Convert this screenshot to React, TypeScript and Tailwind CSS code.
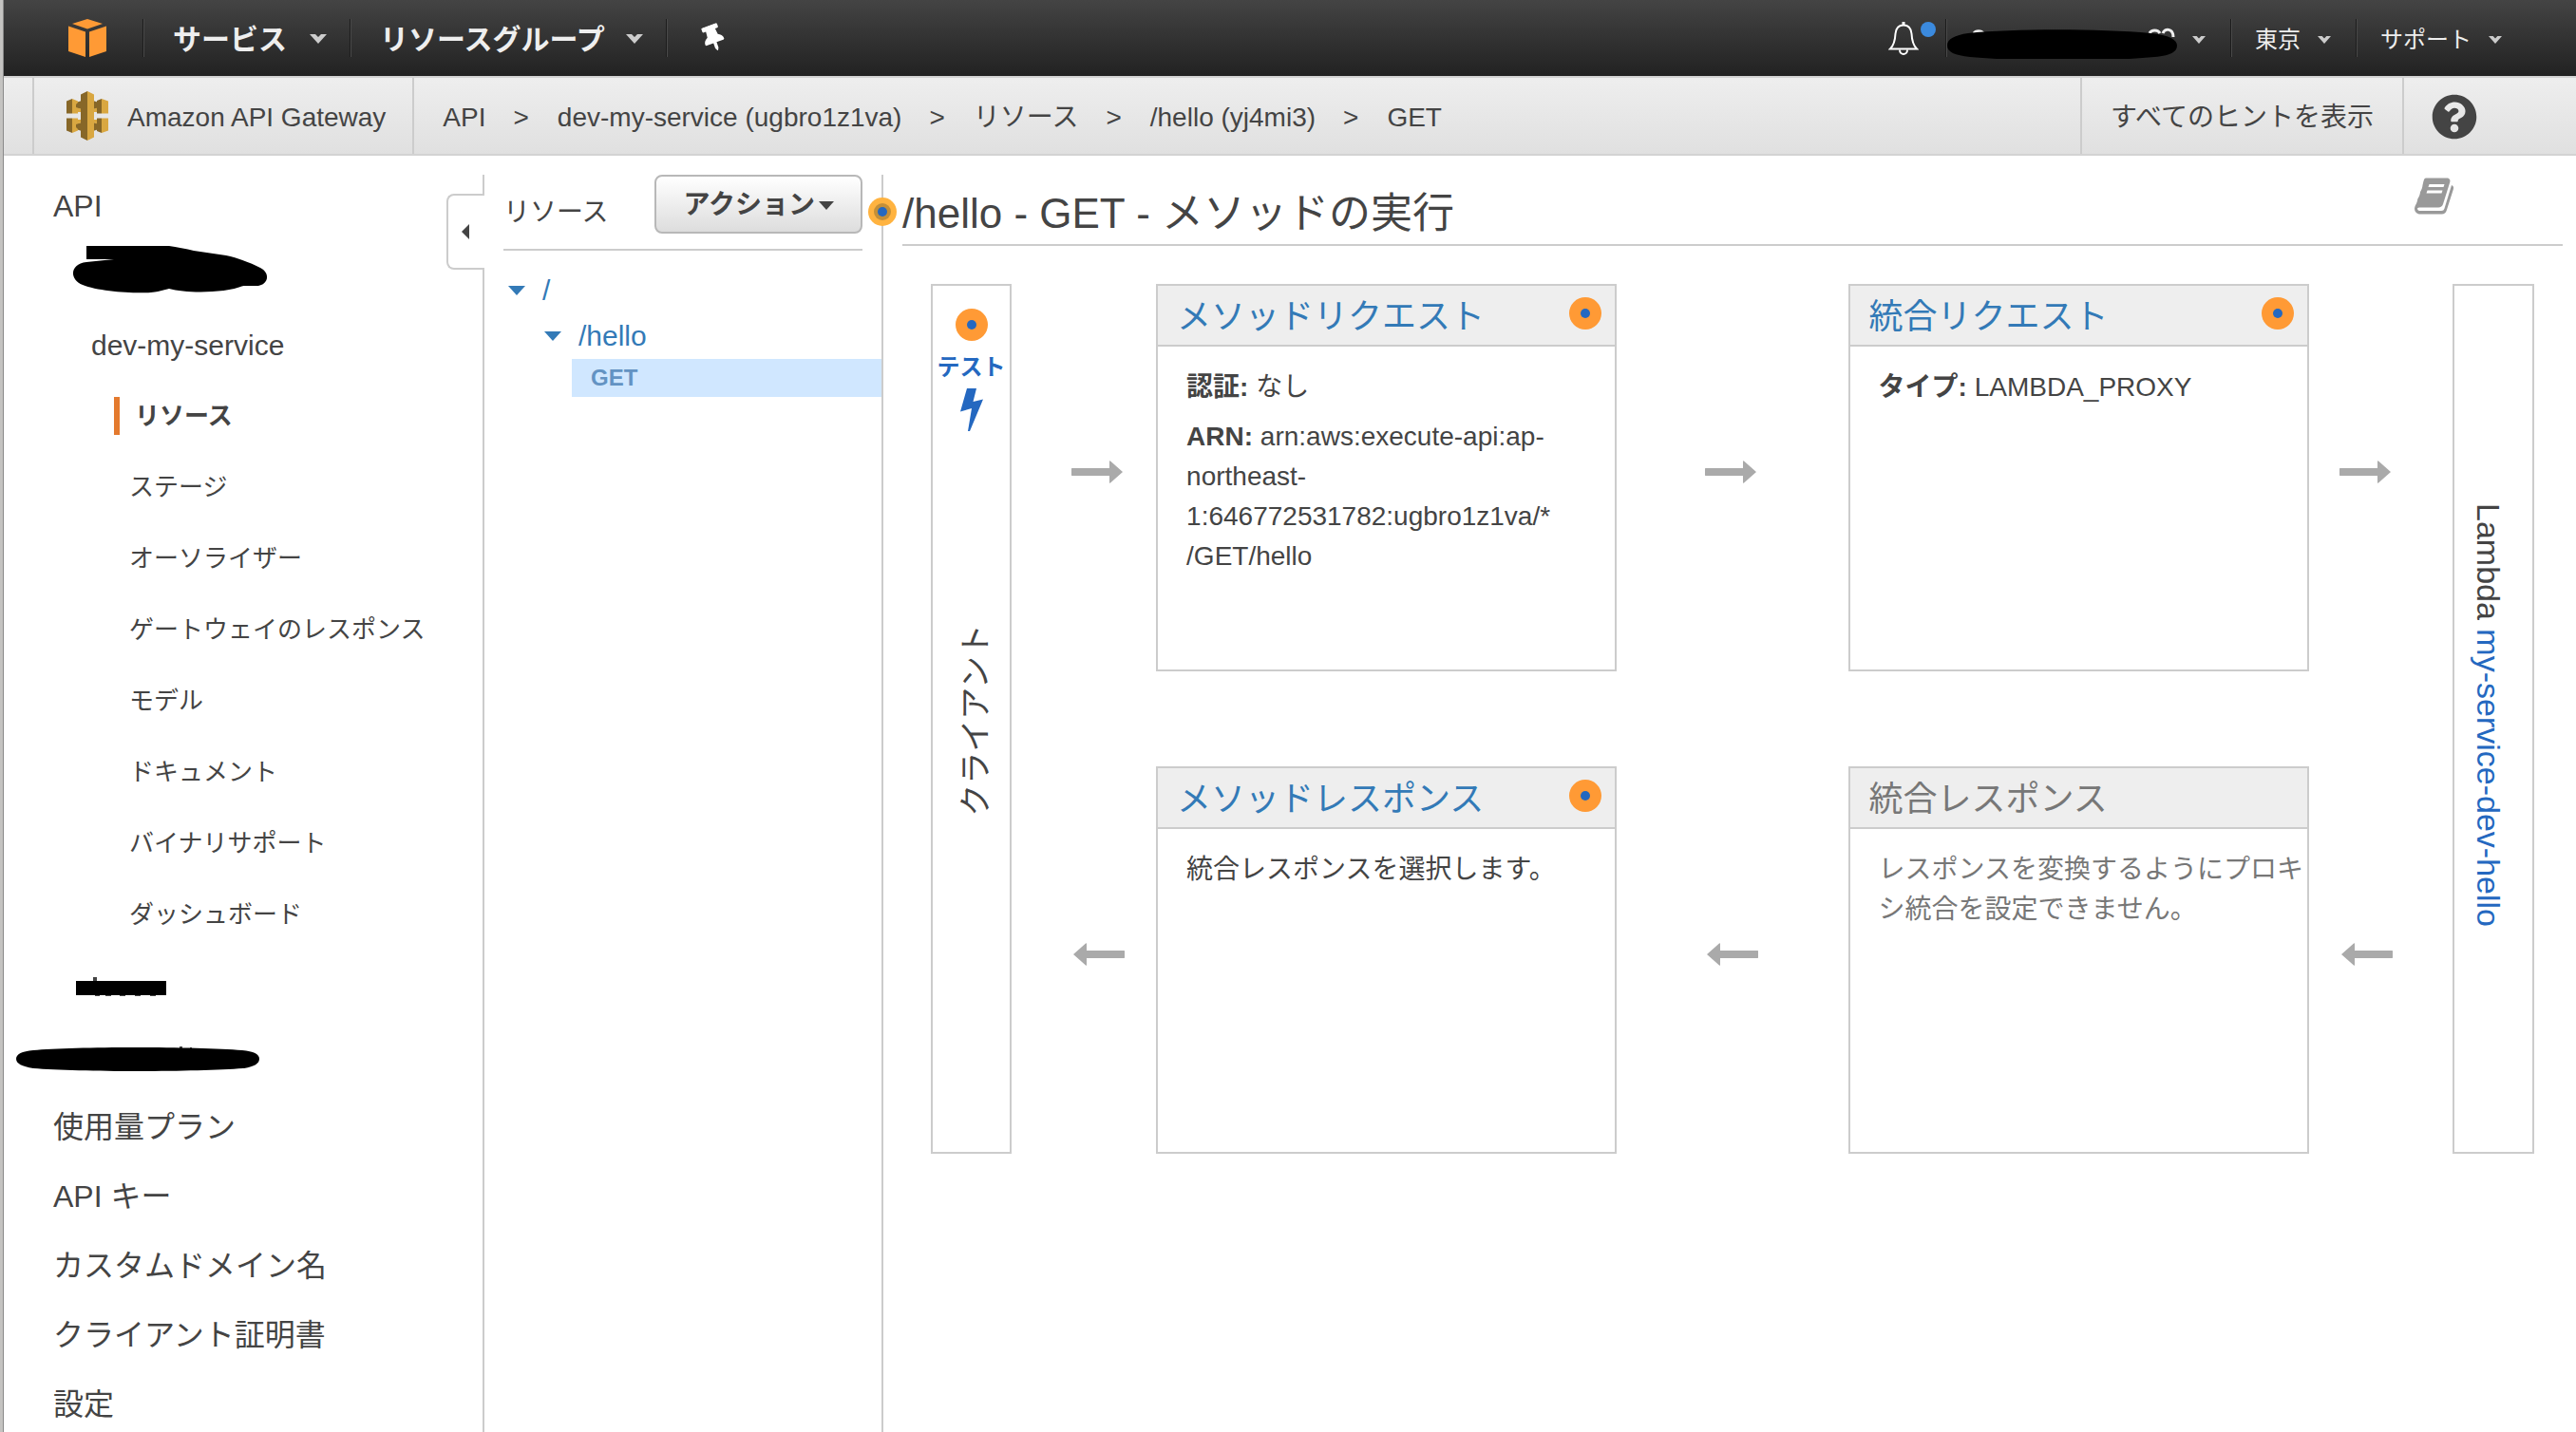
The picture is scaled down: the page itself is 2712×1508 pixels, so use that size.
import React from "react";
import { FaQuestionCircle, FaThumbtack } from "react-icons/fa";

const SUB_PAGES = [
  "ステージ",
  "オーソライザー",
  "ゲートウェイのレスポンス",
  "モデル",
  "ドキュメント",
  "バイナリサポート",
  "ダッシュボード",
];

const SETTINGS_PAGES = [
  "使用量プラン",
  "API キー",
  "カスタムドメイン名",
  "クライアント証明書",
  "設定",
];

const BREADCRUMBS = [
  "API",
  "dev-my-service (ugbro1z1va)",
  "リソース",
  "/hello (yj4mi3)",
  "GET",
];

const AwsLogo = () => (
  <svg className="w-10 h-10" viewBox="0 0 40 40" fill="#ff9a35">
    <path d="M20 0 36 5 20 10.500 4 5z" />
    <path d="M0 7.500 18 13.500V40L0 34z" />
    <path d="M40 7.500 22 13.500V40L40 34z" />
  </svg>
);

const GatewayLogo = () => (
  <svg className="w-11 h-[52px]" viewBox="0 0 44 52">
    <g id="gateway-arms">
      <path fill="#876728" d="M10 12l6-2v9l-6-1zM34 12l-6-2v9l6-1z" />
      <path fill="#d9a741" d="M10 17l6 2v3H9zM34 17l-6 2v3h7z" />
      <path fill="#876728" d="M0 10.500 6 8v15.500H0zM32 10l5-2v15.500h-5z" />
      <path fill="#d9a741" d="M6 8l6 2.500V12l-2 2v5l2 2v2.500H6zM37 8l7 2.500v13h-7z" />
    </g>
    <use href="#gateway-arms" transform="matrix(1 0 0 -1 0 52)" />
    <path fill="#876728" d="M22 0v52l-7-3.500v-45z" />
    <path fill="#d9a741" d="M22 0v52l7-3.500v-45z" />
  </svg>
);

const BellIcon = () => (
  <svg className="w-8 h-9" viewBox="0 0 32 36" fill="none" stroke="white" strokeWidth="2">
    <path d="M16 0v4" strokeWidth="3" />
    <path d="M16 3.500c-5.500 0-8 4-8.500 9-.4 8-1.500 12-5.500 16h28c-4-4-5.100-8-5.500-16-.5-5-3-9-8.500-9z" />
    <path d="M12 29.500c0 6 8 6 8 0" />
  </svg>
);

const BookIcon = () => (
  <svg className="w-[42px] h-[39px]" viewBox="0 0 42 39">
    <path
      fill="#999999"
      d="M12 .5h22c2.500 0 4 1.800 3.300 4.200L30 28c-.8 2.300-2.300 3.500-5 3.500H5c-1.500 0-2.300.7-1.800 2 .5 1.200 1.500 1.500 3 1.500h22c1.800 0 2.800-.8 3.300-2.500L39 8c2 1 2.500 2.300 1.800 4.500l-7 22c-.8 2.500-2.500 4-5 4H6c-3.500 0-6-2.500-6-6 0-1 .5-2 .8-3 1.500-2.500 2.200-4.500 2.500-7 1.500-2.500 2.500-4.500 2.800-7.500 1.400-2.300 2.200-4.500 2.400-7C9.500 5 9.500.5 12 .5z"
    />
    <path fill="white" d="M15.500 7h16l-1 3h-16zM13.500 13.500h16l-1 3h-16z" />
  </svg>
);

const Caret = ({ className }: { className?: string }) => (
  <svg className={className} viewBox="0 0 18 10" fill="currentColor">
    <path d="M0 0h18L9 10z" />
  </svg>
);

const NavCaret = ({ className }: { className: string }) => (
  <svg className={className} viewBox="0 0 18 10" fill="#cccccc">
    <path d="M0 0h6l3 3 3-3h6L9 10z" />
  </svg>
);

const NavDivider = () => (
  <div className="w-[2px] h-10 shrink-0 bg-[#4a4a4a] border-l border-[#1c1c1c]" />
);

const HintDot = ({ className = "" }: { className?: string }) => (
  <button aria-label="ヒント" className={`block shrink-0 ${className}`}>
    <svg className="w-[34px] h-[34px]" viewBox="0 0 34 34">
      <circle cx="17" cy="17" r="17" fill="#ff9a35" />
      <circle cx="17" cy="17" r="5" fill="#2468c0" />
    </svg>
  </button>
);

const FlowArrow = ({ back = false, className = "" }: { back?: boolean; className?: string }) => (
  <div className={`flex items-center justify-center pb-3 ${className}`}>
    <svg className={`w-[54px] h-6 ${back ? "-scale-x-100" : ""}`} viewBox="0 0 54 24" fill="#aaaaaa">
      <path d="M1 8h39V1c0-1 .6-1 1-.5L54 12 41 23.500c-.4.5-1 .5-1-.5v-7H1c-1 0-1-.5-1-1V9c0-.5 0-1 1-1z" />
    </svg>
  </div>
);

interface MethodCardProps {
  title: string;
  disabled?: boolean;
  children: React.ReactNode;
}

const MethodCard: React.FC<MethodCardProps> = ({ title, disabled = false, children }) => (
  <section className="h-[408px] border-2 border-[#cccccc]">
    <header className="flex items-center justify-between h-16 pl-5 pr-[14px] bg-[#eeeeee] border-b-2 border-[#cccccc]">
      <h2 className="pt-1 text-[36px] leading-[60px]">
        {disabled ? (
          <span className="text-[#777777]">{title}</span>
        ) : (
          <a href="#" className="text-[#337ab7]">{title}</a>
        )}
      </h2>
      {!disabled && <HintDot className="mb-1" />}
    </header>
    <div className={`pl-[30px] pt-[22px] text-[28px] leading-[42px] ${disabled ? "text-[#777777]" : ""}`}>
      {children}
    </div>
  </section>
);

const TopNav = () => (
  <nav className="flex items-center h-20 shrink-0 bg-gradient-to-b from-[#444444] to-[#222222] text-[#eeeeee] [text-shadow:0_2px_1px_black]">
    <a href="#" aria-label="AWS" className="ml-[68px] mr-[38px]">
      <AwsLogo />
    </a>
    <NavDivider />
    <button className="flex items-center gap-6 pl-[30px] pr-6 pt-[2px] text-[30px] font-bold">
      サービス
      <NavCaret className="w-[18px] h-[10px]" />
    </button>
    <NavDivider />
    <button className="flex items-center gap-[22px] pl-[30px] pr-6 pt-[2px] text-[30px] font-bold">
      リソースグループ
      <NavCaret className="w-[18px] h-[10px]" />
    </button>
    <NavDivider />
    <button aria-label="ピン" className="px-9 text-white">
      <FaThumbtack className="w-6 h-7 -rotate-[20deg]" />
    </button>

    <div className="flex items-center ml-auto pr-[78px] text-[24px]">
      <button aria-label="通知" className="relative mr-7 pt-[2px]">
        <BellIcon />
        <span className="absolute top-[2px] left-[34px] w-4 h-4 rounded-full bg-[#3b8ade]" />
      </button>
      <NavDivider />
      <button aria-label="アカウント" className="flex items-center gap-4 pr-[26px] pt-[3px]">
        <svg className="w-[242px] h-10" viewBox="0 0 242 40">
          <path
            d="M28 13c2-3 8-3 10 0M213 13c2-4 9-4 11 0M227 13c2-6 11-5 11 4"
            fill="none"
            stroke="#eeeeee"
            strokeWidth="3"
          />
          <path
            d="M22 13C70 8 160 8 214 13c18 2 28 6 28 13s-8 11-24 12c-50 5-140 5-194 0C8 36 0 33 0 26S8 15 22 13z"
            fill="black"
          />
        </svg>
        <NavCaret className="w-[14px] h-2" />
      </button>
      <NavDivider />
      <button className="flex items-center gap-[18px] pl-6 pr-[26px] pt-[3px]">
        東京
        <NavCaret className="w-[14px] h-2" />
      </button>
      <NavDivider />
      <button className="flex items-center gap-[18px] pl-6 pt-[3px]">
        サポート
        <NavCaret className="w-[14px] h-2" />
      </button>
    </div>
  </nav>
);

const BreadcrumbBar = () => (
  <div className="flex h-[84px] shrink-0 pl-[30px] bg-gradient-to-b from-[#eeeeee] to-[#e0e0e0] border-y-2 border-[#d3d3d3] text-[28px]">
    <a href="#" className="flex items-center gap-5 pl-[34px] pr-7 border-x-2 border-[#cccccc]">
      <GatewayLogo />
      <span className="pt-[3px]">Amazon API Gateway</span>
    </a>
    <ol className="flex items-center pl-[30px] pt-[3px]">
      {BREADCRUMBS.map((crumb, index) => (
        <li key={crumb}>
          {index > 0 && <span className="pl-[29px] pr-[30px]">&gt;</span>}
          <a href="#">{crumb}</a>
        </li>
      ))}
    </ol>
    <button className="ml-auto px-[30px] pt-[3px] border-x-2 border-[#cccccc]">すべてのヒントを表示</button>
    <button aria-label="ヘルプ" className="pl-[29px] pr-[104px] pt-[2px]">
      <FaQuestionCircle className="w-12 h-12" />
    </button>
  </div>
);

const Sidebar = () => (
  <aside className="relative w-[506px] shrink-0 border-r-2 border-[#cccccc]">
    <a href="#" className="flex items-center h-[66px] pl-[52px] text-[32px]">API</a>
    <ul>
      <li className="h-[75px] pt-2 pl-[72px]">
        <svg className="w-[206px] h-[52px]" viewBox="0 0 206 52">
          <path d="M15 1h87c8 1 18 3 26 5l34 5c14 3 28 9 36 13 12 6 8 20-6 19h-12c-20 8-60 8-78 3l-12 3c-12 3-60 1-79-7-14-5-14-22 4-24l29-3H15z" />
        </svg>
      </li>
      <li className="h-[75px] pl-[92px]">
        <a href="#" className="text-[30px] leading-[78px]">dev-my-service</a>
      </li>
      <li className="flex items-center h-[75px] pl-[116px]">
        <a href="#" className="pl-4 border-l-[6px] border-[#e47a2e] text-[26px] leading-[40px] font-bold">
          リソース
        </a>
      </li>
      {SUB_PAGES.map((page) => (
        <li key={page} className="h-[75px] pl-[132px]">
          <a href="#" className="text-[26px] leading-[76px]">{page}</a>
        </li>
      ))}
      <li className="flex items-center h-[75px] pl-[76px] pt-1">
        <svg className="w-[95px] h-6" viewBox="0 0 95 24">
          <path d="M18 1h4v5h-4zM20 20h5v1h-5zM31 20h6v1h-6zM46 20h6v1h-6zM62 20h6v1h-6zM78 20h6v1h-6z" fill="#444444" />
          <path d="M0 5h95v15H0z" />
        </svg>
      </li>
      <li className="flex items-center h-[75px] pl-[13px] pt-1">
        <svg className="w-[256px] h-7" viewBox="0 0 256 28">
          <path d="M172 1h3v3h-3zM183 2h2v3h-2z" fill="#444444" />
          <path d="M18 5C60 1 190 1 238 5c12 1 18 4 18 9s-5 8-16 10c-48 4-174 4-222 0C6 22 0 19 0 14s6-8 18-9z" />
        </svg>
      </li>
      {SETTINGS_PAGES.map((page) => (
        <li key={page} className="h-[73px] pl-[52px]">
          <a href="#" className="text-[32px] leading-[74px]">{page}</a>
        </li>
      ))}
    </ul>
    <button
      aria-label="サイドバーを閉じる"
      className="absolute top-5 -right-[2px] flex items-center w-10 h-20 pl-[14px] bg-white border-2 border-r-0 border-[#cccccc] rounded-l-lg"
    >
      <svg className="w-2 h-4" viewBox="0 0 8 16" fill="#444444">
        <path d="M8 0v16L0 8z" />
      </svg>
    </button>
  </aside>
);

const ResourceTree = () => (
  <div className="w-[420px] shrink-0 border-r-2 border-[#cccccc]">
    <div className="flex items-start justify-between ml-5 mr-5 pb-4 border-b-2 border-[#cccccc]">
      <span className="text-[28px] leading-[80px] h-[62px]">リソース</span>
      <button className="flex items-center gap-1 h-[62px] px-7 pt-[2px] border-2 border-[#b8b8b8] rounded-lg bg-gradient-to-b from-white to-[#dddddd] text-[28px] font-bold">
        アクション
        <Caret className="w-4 h-[9px]" />
      </button>
    </div>
    <ul className="pt-4 text-[30px] text-[#337ab7]">
      <li className="flex items-center h-[49px] pl-[25px] pt-[2px] gap-[18px]">
        <Caret className="w-[18px] h-[10px]" />
        <a href="#">/</a>
      </li>
      <li className="flex items-center h-[49px] pl-[63px] gap-[18px]">
        <Caret className="w-[18px] h-[10px]" />
        <a href="#">/hello</a>
      </li>
      <li className="ml-[92px] pl-5 bg-[#d0e7ff] text-[24px] leading-10 font-bold text-[#6393c3]">
        <a href="#">GET</a>
      </li>
    </ul>
  </div>
);

const MethodExecution = () => (
  <main className="relative flex-1 pl-5 pr-[14px]">
    <button aria-label="ヒント" className="absolute top-6 -left-4">
      <svg className="w-[30px] h-[30px]" viewBox="0 0 30 30">
        <circle cx="15" cy="15" r="15" fill="#ffb340" />
        <circle cx="15" cy="15" r="9" fill="#c48f38" />
        <circle cx="15" cy="15" r="5" fill="#2468c0" />
      </svg>
    </button>
    <div className="flex justify-between h-[75px] pr-[114px] border-b-2 border-[#cccccc]">
      <h1 className="text-[44px] leading-[82px]">/hello - GET - メソッドの実行</h1>
      <a href="#" aria-label="ドキュメント" className="pt-[3px]">
        <BookIcon />
      </a>
    </div>

    <div className="grid grid-cols-[85px_152fr_485fr_243fr_485fr_151fr_86px] gap-y-[100px] mt-10 ml-[30px] mr-[30px]">
      <div className="row-span-2 flex flex-col items-center pt-6 border-2 border-[#cccccc]">
        <HintDot />
        <button className="flex flex-col items-center gap-1 pt-[10px] text-[24px] font-bold text-[#2468c0]">
          テスト
          <svg className="w-6 h-[45px]" viewBox="0 0 24 45" fill="currentColor">
            <path d="M7 0h10l-3.500 14L24 11.500 10 45H8l4-24L0 24.500z" />
          </svg>
        </button>
        <span className="mt-[203px] pl-2 text-[34px] leading-[40px] [writing-mode:sideways-lr]">
          クライアント
        </span>
      </div>
      <FlowArrow className="pl-[28px]" />
      <MethodCard title="メソッドリクエスト">
        <p className="mb-[10px]">
          <b>認証:</b> なし
        </p>
        <p>
          <b>ARN:</b> arn:aws:execute-api:ap-
          <br />
          northeast-
          <br />
          1:646772531782:ugbro1z1va/*
          <br />
          /GET/hello
        </p>
      </MethodCard>
      <FlowArrow className="pr-1" />
      <MethodCard title="統合リクエスト">
        <p>
          <b>タイプ:</b> LAMBDA_PROXY
        </p>
      </MethodCard>
      <FlowArrow className="pr-[32px]" />
      <div className="row-span-2 flex items-center justify-center pb-2 border-2 border-[#cccccc]">
        <p className="pr-[10px] text-[34px] leading-[40px] [writing-mode:sideways-rl]">
          Lambda <a href="#" className="text-[#2468c0]">my-service-dev-hello</a>
        </p>
      </div>
      <FlowArrow back className="pl-[32px]" />
      <MethodCard title="メソッドレスポンス">
        <p>統合レスポンスを選択します。</p>
      </MethodCard>
      <FlowArrow back />
      <MethodCard title="統合レスポンス" disabled>
        <p>レスポンスを変換するようにプロキシ統合を設定できません。</p>
      </MethodCard>
      <FlowArrow back className="pr-[28px]" />
    </div>
  </main>
);

const App: React.FC = () => {
  return (
    <div className="flex h-screen overflow-hidden bg-white font-['Liberation_Sans','Noto_Sans_CJK_JP',sans-serif] text-[#444444]">
      {/* Edge of the window behind */}
      <div className="w-1 shrink-0 bg-[#c4c3c1] border-r border-[#8a8a8a]" />
      <div className="flex flex-col flex-1 min-w-0">
        <TopNav />
        <BreadcrumbBar />
        <div className="flex flex-1 min-h-0 pt-5">
          <Sidebar />
          <ResourceTree />
          <MethodExecution />
        </div>
      </div>
    </div>
  );
};

export default App;
